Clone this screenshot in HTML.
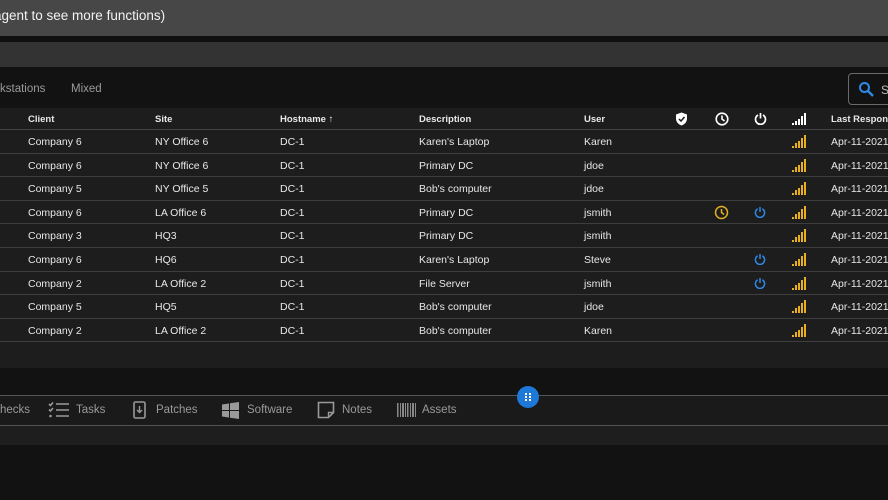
<!DOCTYPE html>
<html><head><style>
*{margin:0;padding:0;box-sizing:border-box}
body{width:888px;height:500px;overflow:hidden;background:#121212;font-family:"Liberation Sans",sans-serif;color:#e8e8e8;position:relative}
.a{position:absolute}
.row{position:absolute;left:0;width:888px;height:23.6px;border-bottom:1px solid #3e3e3e;background:#1d1d1d;font-size:10.5px}
.row span{position:absolute;top:6px;white-space:nowrap}
.sig{position:absolute;left:792px;top:5px}
</style></head><body>
<div class="a" style="left:0;top:0;width:888px;height:36px;background:#474747"></div>
<div class="a" style="left:-6px;top:8px;font-size:13.5px;color:#f2f2f2">agent to see more functions)</div>
<div class="a" style="left:0;top:36px;width:888px;height:6px;background:#101010"></div>
<div class="a" style="left:0;top:42px;width:888px;height:25px;background:#333"></div>
<div class="a" style="left:0;top:67px;width:888px;height:41px;background:#121212"></div>
<div class="a" style="left:0;top:83px;font-size:11.5px;color:#9a9a9a">kstations</div>
<div class="a" style="left:71px;top:83px;font-size:11.5px;color:#9a9a9a">Mixed</div>
<div class="a" style="left:848px;top:73px;width:50px;height:32px;border:1px solid #6a6a6a;border-radius:4px"></div>
<svg class="a" style="left:858px;top:81px" width="16" height="16" viewBox="0 0 16 16"><circle cx="6.5" cy="6.5" r="4.5" fill="none" stroke="#2e8ae6" stroke-width="2"/><path d="M10 10l5 5" stroke="#2e8ae6" stroke-width="2.4"/></svg>
<div class="a" style="left:881px;top:83px;font-size:12px;color:#bbb">S</div>
<div class="row" style="top:108px;height:22px;font-weight:bold;font-size:9.5px;border-bottom:1px solid #444">
<span style="left:28px">Client</span><span style="left:155px">Site</span><span style="left:280px">Hostname ↑</span><span style="left:419px">Description</span><span style="left:584px">User</span><span style="left:831px">Last Respons</span>
<svg class="a" style="left:675px;top:4px" width="13" height="14" viewBox="0 0 13 14"><path d="M6.5 0.5L12 2.5v4c0 3.5-2.5 6-5.5 7C3.5 12.5 1 10 1 6.5v-4z" fill="#fff"/><path d="M4 7l2 2 3.5-4" stroke="#1d1d1d" stroke-width="1.5" fill="none"/></svg>
<svg class="a" style="left:715px;top:4px" width="14" height="14" viewBox="0 0 14 14"><circle cx="7" cy="7" r="5.8" fill="none" stroke="#fff" stroke-width="1.6"/><path d="M7 3.5V7l2.5 2" stroke="#fff" stroke-width="1.6" fill="none"/></svg>
<svg class="a" style="left:754px;top:4px" width="13" height="13" viewBox="0 0 13 13"><path d="M4 3a5 5 0 1 0 5 0" stroke="#fff" stroke-width="1.7" fill="none"/><path d="M6.5 1v5.5" stroke="#fff" stroke-width="1.7"/></svg>
<svg class="a" style="left:792px;top:5px" width="14" height="12" viewBox="0 0 14 12"><g fill="#fff"><rect x="0" y="10" width="2" height="2"/><rect x="3" y="8" width="2" height="4"/><rect x="6" y="6" width="2" height="6"/><rect x="9" y="3" width="2" height="9"/><rect x="12" y="0" width="2" height="12"/></g></svg>
</div>
<div id="rows"></div>
<div class="a" style="left:0;top:342px;width:888px;height:26px;background:#1d1d1d"></div>
<div class="a" style="left:0;top:368px;width:888px;height:28px;background:#121212"></div>
<div class="a" style="left:0;top:395px;width:888px;height:31px;background:#1a1a1a;border-top:1px solid #555;border-bottom:1px solid #555"></div>
<div class="a" style="left:0;top:426px;width:888px;height:19px;background:#1e1e1e"></div>
<div class="a" style="left:517px;top:386px;width:22px;height:22px;border-radius:50%;background:#1e78d8"></div>
<svg class="a" style="left:524px;top:393px" width="8" height="8" viewBox="0 0 8 8"><g fill="#fff"><rect x="1" y="0" width="2" height="2"/><rect x="5" y="0" width="2" height="2"/><rect x="1" y="3" width="2" height="2"/><rect x="5" y="3" width="2" height="2"/><rect x="1" y="6" width="2" height="2"/><rect x="5" y="6" width="2" height="2"/></g></svg>
<div class="a" style="left:0;top:404px;font-size:11.5px;color:#9a9a9a">hecks</div>
<svg class="a" style="left:48px;top:402px" width="22" height="16" viewBox="0 0 22 16"><g stroke="#999" stroke-width="1.6" fill="none"><path d="M1 2l1.5 1.5L5 0.5M1 7.5l1.5 1.5L5 6"/><path d="M8 2h13M8 8h13M8 14h13"/></g><circle cx="2.5" cy="14" r="1.3" fill="#999"/></svg>
<div class="a" style="left:76px;top:404px;font-size:11.5px;color:#9a9a9a">Tasks</div>
<svg class="a" style="left:133px;top:401px" width="14" height="18" viewBox="0 0 14 18"><rect x="1" y="1" width="11" height="16" rx="1.5" fill="none" stroke="#999" stroke-width="1.6"/><path d="M6.5 5v6M4 9l2.5 2.5L9 9" stroke="#999" stroke-width="1.4" fill="none"/></svg>
<div class="a" style="left:156px;top:404px;font-size:11.5px;color:#9a9a9a">Patches</div>
<svg class="a" style="left:222px;top:402px" width="17" height="17" viewBox="0 0 17 17"><path d="M0 2.5l7-1v6.5H0zM8 1.3L17 0v8H8zM0 9h7v6.5l-7-1zM8 9h9v8l-9-1.3z" fill="#999"/></svg>
<div class="a" style="left:247px;top:404px;font-size:11.5px;color:#9a9a9a">Software</div>
<svg class="a" style="left:317px;top:401px" width="18" height="18" viewBox="0 0 18 18"><path d="M1.5 1.5h15v10l-5 5h-10z" fill="none" stroke="#999" stroke-width="1.6"/><path d="M11.5 16.5v-5h5" fill="none" stroke="#999" stroke-width="1.4"/></svg>
<div class="a" style="left:342px;top:404px;font-size:11.5px;color:#9a9a9a">Notes</div>
<svg class="a" style="left:397px;top:403px" width="19" height="14" viewBox="0 0 19 14"><g fill="#888"><rect x="0" y="0" width="1.5" height="14"/><rect x="3" y="0" width="1" height="14"/><rect x="5" y="0" width="2" height="14"/><rect x="8" y="0" width="1" height="14"/><rect x="10" y="0" width="1.5" height="14"/><rect x="13" y="0" width="1" height="14"/><rect x="15" y="0" width="2" height="14"/><rect x="18" y="0" width="1" height="14"/></g></svg>
<div class="a" style="left:422px;top:404px;font-size:11.5px;color:#9a9a9a">Assets</div>
<script>
var d=[["Company 6","NY Office 6","Karen's Laptop","Karen",0,0],["Company 6","NY Office 6","Primary DC","jdoe",0,0],["Company 5","NY Office 5","Bob's computer","jdoe",0,0],["Company 6","LA Office 6","Primary DC","jsmith",1,1],["Company 3","HQ3","Primary DC","jsmith",0,0],["Company 6","HQ6","Karen's Laptop","Steve",0,1],["Company 2","LA Office 2","File Server","jsmith",0,1],["Company 5","HQ5","Bob's computer","jdoe",0,0],["Company 2","LA Office 2","Bob's computer","Karen",0,0]];
var h="";d.forEach(function(r,i){var t=130+i*23.6;
h+='<div class="row" style="top:'+t+'px"><span style="left:28px">'+r[0]+'</span><span style="left:155px">'+r[1]+'</span><span style="left:280px">DC-1</span><span style="left:419px">'+r[2]+'</span><span style="left:584px">'+r[3]+'</span><span style="left:831px">Apr-11-2021</span>';
if(r[4])h+='<svg class="a" style="left:714px;top:4px" width="15" height="15" viewBox="0 0 15 15"><circle cx="7.5" cy="7.5" r="6" fill="none" stroke="#e0b020" stroke-width="1.5"/><path d="M7.5 4v3.5l2.5 2" stroke="#e0b020" stroke-width="1.5" fill="none"/></svg>';
if(r[5])h+='<svg class="a" style="left:754px;top:5px" width="12" height="12" viewBox="0 0 13 13"><path d="M4 3a5 5 0 1 0 5 0" stroke="#2e8ae6" stroke-width="1.6" fill="none"/><path d="M6.5 1v5.5" stroke="#2e8ae6" stroke-width="1.6"/></svg>';
h+='<svg class="sig" width="15" height="13" viewBox="0 0 15 13"><g fill="#e8b020"><rect x="0" y="11" width="2" height="2"/><rect x="3" y="8" width="2" height="5"/><rect x="6" y="6" width="2" height="7"/><rect x="9" y="3" width="2" height="10"/><rect x="12" y="0" width="2" height="13"/></g></svg></div>';});
document.getElementById("rows").innerHTML=h;
</script>
</body></html>
